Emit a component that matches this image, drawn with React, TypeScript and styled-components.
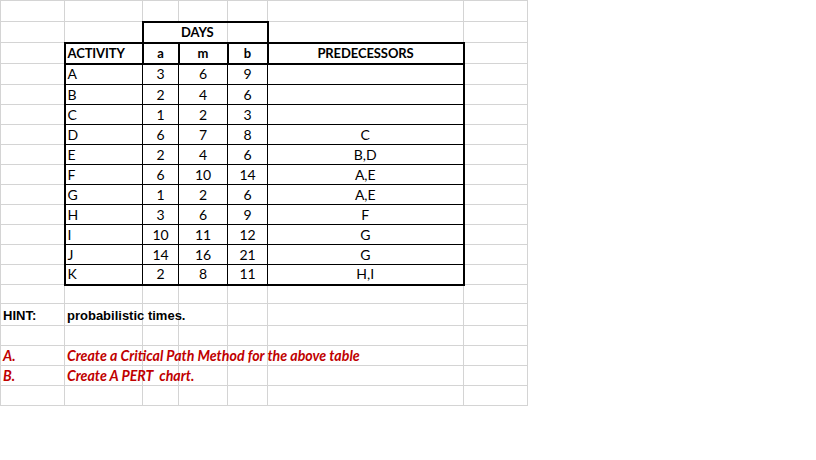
import { FC, ReactNode } from "react";
import styled, { createGlobalStyle, css } from "styled-components";

type Edge = "grid" | "none" | "thin" | "medium";

const GlobalStyle = createGlobalStyle`
  html, body {
    margin: 0;
    padding: 0;
    background: #ffffff;
  }
`;

const COLS = [64, 78, 36, 49, 40, 196, 64];
const ROWS = [21, 21, 21, 21, 20, 20, 20, 20, 20, 20, 20, 20, 20, 20, 19, 20, 20, 20, 20, 20];

const ACTIVITIES: [string, number, number, number, string][] = [
  ["A", 3, 6, 9, ""],
  ["B", 2, 4, 6, ""],
  ["C", 1, 2, 3, ""],
  ["D", 6, 7, 8, "C"],
  ["E", 2, 4, 6, "B,D"],
  ["F", 6, 10, 14, "A,E"],
  ["G", 1, 2, 6, "A,E"],
  ["H", 3, 6, 9, "F"],
  ["I", 10, 11, 12, "G"],
  ["J", 14, 16, 21, "G"],
  ["K", 2, 8, 11, "H,I"],
];

// horizontal line above row r, under column c
const hLine = (r: number, c: number): Edge => {
  const inTable = c >= 1 && c <= 5;
  if (r === 1 && c >= 2 && c <= 4) return "medium";
  if ((r === 2 || r === 3 || r === 14) && inTable) return "medium";
  if (r >= 4 && r <= 13 && inTable) return "thin";
  return "grid";
};

// vertical line left of column c, beside row r
const vLine = (c: number, r: number): Edge => {
  if (r === 1) {
    if (c === 2 || c === 5) return "medium";
    if (c === 3) return "none";
    return "grid";
  }
  if (r === 2 && c >= 1 && c <= 6) return "medium";
  if (r >= 3 && r <= 13) {
    if (c === 1 || c === 6) return "medium";
    if (c >= 2 && c <= 5) return "thin";
  }
  return "grid";
};

const edge = (e: Edge) => {
  switch (e) {
    case "medium":
      return "2px solid #000000";
    case "thin":
      return "1px solid #000000";
    case "none":
      return "1px solid #ffffff";
    default:
      return "1px solid #d4d4d4";
  }
};

export default function App() {
  const cells: ReactNode[][] = ROWS.map(() => COLS.map(() => null));

  cells[1][3] = <Label $left>DAYS</Label>;
  cells[2][1] = <Label $left>ACTIVITY</Label>;
  cells[2][2] = <Label>a</Label>;
  cells[2][3] = <Label>m</Label>;
  cells[2][4] = <Label>b</Label>;
  cells[2][5] = <Label>PREDECESSORS</Label>;

  ACTIVITIES.forEach(([name, a, m, b, pre], i) => {
    const r = i + 3;
    cells[r][1] = <Value $left>{name}</Value>;
    cells[r][2] = <Value>{a}</Value>;
    cells[r][3] = <Value>{m}</Value>;
    cells[r][4] = <Value>{b}</Value>;
    cells[r][5] = <Value>{pre}</Value>;
  });

  cells[15][0] = <Hint>HINT:</Hint>;
  cells[15][1] = <Hint>probabilistic times.</Hint>;
  cells[17][0] = <Task>A.</Task>;
  cells[17][1] = <Task>Create a Critical Path Method for the above table</Task>;
  cells[18][0] = <Task>B.</Task>;
  cells[18][1] = <Task>Create A PERT&nbsp; chart.</Task>;

  return (
    <>
      <GlobalStyle />
      <Sheet>
        <colgroup>
          {COLS.map((w, i) => (
            <col key={i} style={{ width: w }} />
          ))}
        </colgroup>
        <tbody>
          {ROWS.map((h, r) => (
            <Row key={r} $height={h}>
              {COLS.map((_, c) => (
                <SheetCell
                  key={c}
                  top={hLine(r, c)}
                  bottom={hLine(r + 1, c)}
                  left={vLine(c, r)}
                  right={vLine(c + 1, r)}
                >
                  {cells[r][c]}
                </SheetCell>
              ))}
            </Row>
          ))}
        </tbody>
      </Sheet>
    </>
  );
}

const SheetCell: FC<{
  top: Edge;
  bottom: Edge;
  left: Edge;
  right: Edge;
  children?: ReactNode;
}> = ({ top, bottom, left, right, children }) => (
  <Cell $t={top} $b={bottom} $l={left} $r={right}>
    {children}
  </Cell>
);

const Sheet = styled.table`
  border-collapse: collapse;
  table-layout: fixed;
  width: 528px;
  margin: 0;
`;

const Row = styled.tr<{ $height: number }>`
  height: ${({ $height }) => $height}px;
`;

const Cell = styled.td<{ $t: Edge; $b: Edge; $l: Edge; $r: Edge }>`
  padding: 0 2px;
  overflow: visible;
  white-space: nowrap;
  text-align: center;
  vertical-align: middle;
  border-top: ${({ $t }) => edge($t)};
  border-bottom: ${({ $b }) => edge($b)};
  border-left: ${({ $l }) => edge($l)};
  border-right: ${({ $r }) => edge($r)};
`;

const calibri = css`
  font-family: Lato, "Open Sans", sans-serif;
  font-size: 14px;
  line-height: 18px;
  color: #000000;
`;

const Value = styled.div<{ $left?: boolean }>`
  ${calibri};
  text-align: ${({ $left }) => ($left ? "left" : "center")};
`;

const Label = styled(Value)`
  font-size: 13px;
  font-weight: 700;
  letter-spacing: -0.1px;
`;

const Hint = styled.div`
  font-family: "Liberation Sans", Arial, sans-serif;
  font-size: 13px;
  font-weight: 700;
  line-height: 18px;
  margin-top: 3px;
  color: #000000;
  text-align: left;
`;

const Task = styled.div`
  ${calibri};
  font-size: 14.2px;
  font-weight: 700;
  font-style: italic;
  color: #c00000;
  text-align: left;
`;
